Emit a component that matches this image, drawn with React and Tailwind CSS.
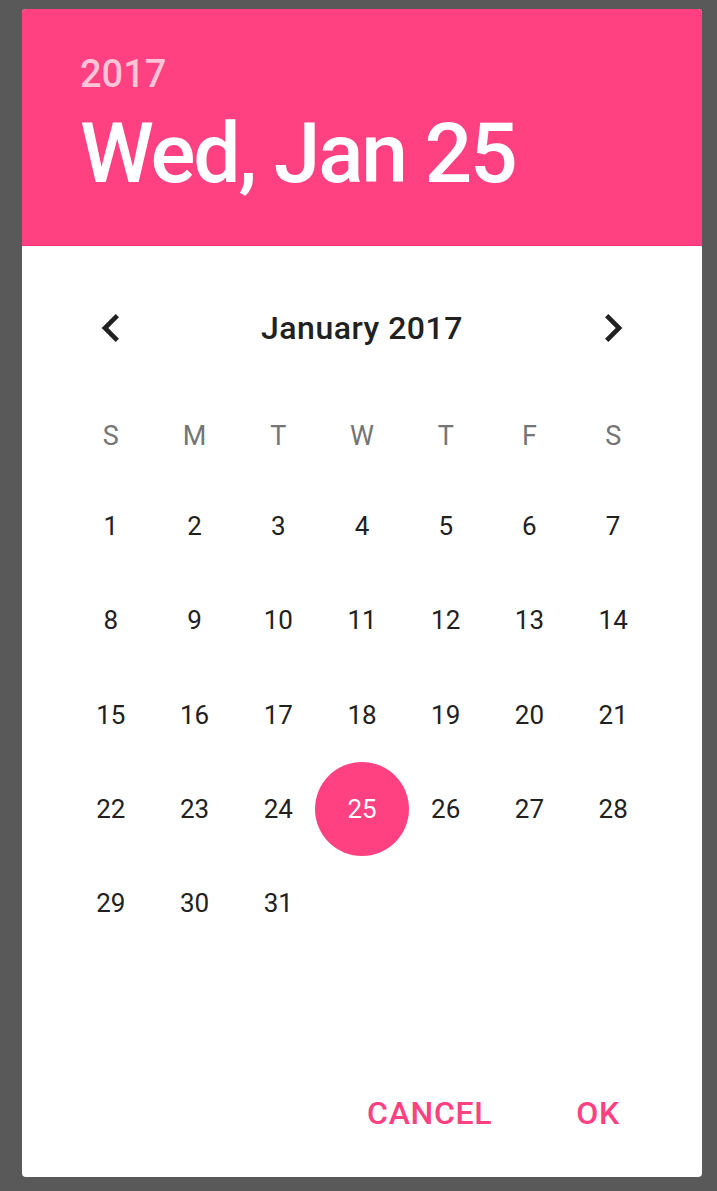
import React from "react";

function ChevronLeft() {
  return (
    <svg width="56" height="56" viewBox="0 0 24 24" fill="#212121">
      <path d="M15.41 7.41L14 6l-6 6 6 6 1.41-1.41L10.83 12z" />
    </svg>
  );
}
function ChevronRight() {
  return (
    <svg width="56" height="56" viewBox="0 0 24 24" fill="#212121">
      <path d="M10 6L8.59 7.41 13.17 12l-4.58 4.59L10 18l6-6z" />
    </svg>
  );
}

export default function App() {
  const days = ["S", "M", "T", "W", "T", "F", "S"];
  const cells = [];
  for (let i = 1; i <= 31; i++) cells.push(i);
  const rows = [];
  for (let r = 0; r < 5; r++) rows.push(cells.slice(r * 7, r * 7 + 7));

  return (
    <div
      className="w-full h-[1191px] bg-[#595959] pt-[9px] pl-[22px] pr-[15px]"
      style={{ fontFamily: "Roboto, 'Noto Sans', sans-serif" }}
    >
      <div className="h-[1168px] bg-white rounded-[4px] overflow-hidden flex flex-col">
        <div className="h-[237px] bg-[#ff4081] border-b border-[#f5306f] pl-[58px] pt-[46px] flex flex-col">
          <div className="text-[38px] leading-[38px] font-medium text-white/70">2017</div>
          <div className="mt-[19px] text-[84px] leading-[84px] font-medium tracking-[-2.2px] text-white">
            Wed, Jan 25
          </div>
        </div>

        <div className="px-[47px] pt-[35px]">
          <div className="grid grid-cols-7 h-[94px] items-center">
            <div className="flex justify-center items-center">
              <ChevronLeft />
            </div>
            <div className="col-span-5 text-center text-[32px] leading-none font-medium tracking-[0.5px] text-[#212121]">
              January 2017
            </div>
            <div className="flex justify-center items-center">
              <ChevronRight />
            </div>
          </div>

          <div className="mt-[18px] grid grid-cols-7 h-[86px] items-center">
            {days.map((d, i) => (
              <div key={i} className="text-center text-[27px] leading-none text-[#757575]">
                {d}
              </div>
            ))}
          </div>

          {rows.map((row, ri) => (
            <div key={ri} className="grid grid-cols-7 h-[94.25px] items-center">
              {row.map((n) => (
                <div key={n} className="flex justify-center items-center">
                  {n === 25 ? (
                    <div className="w-[94px] h-[94px] shrink-0 rounded-full bg-[#ff4081] flex items-center justify-center text-[26px] leading-none text-white">
                      25
                    </div>
                  ) : (
                    <span className="text-[26px] leading-none text-[#212121]">{n}</span>
                  )}
                </div>
              ))}
            </div>
          ))}
        </div>

        <div className="mt-auto flex justify-end items-center gap-[84px] pr-[82px] pb-[48px]">
          <span className="text-[32px] leading-none font-medium tracking-[0.7px] text-[#ff4081]">
            CANCEL
          </span>
          <span className="text-[32px] leading-none font-medium tracking-[0.7px] text-[#ff4081]">
            OK
          </span>
        </div>
      </div>
    </div>
  );
}
